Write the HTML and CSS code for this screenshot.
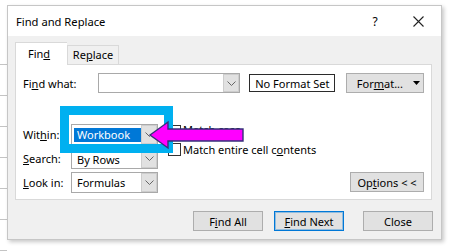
FILE: index.html
```html
<!DOCTYPE html>
<html>
<head>
<meta charset="utf-8">
<link rel="stylesheet" href="styles.css">
</head>
<body>
<div class="stage">
  <div class="dialog">
    <div class="titlebar">
      <span class="title">Find and Replace</span>
      <span class="help">?</span>
      <span class="close"><svg width="11" height="11" viewBox="0 0 11 11"><path d="M0.5 0.5L10.5 10.5M10.5 0.5L0.5 10.5" stroke="#222" stroke-width="1.1" fill="none"/></svg></span>
    </div>
    <div class="tabs">
      <div class="tab active">Fin<u>d</u></div>
      <div class="tab">Re<u>p</u>lace</div>
    </div>
    <div class="panel">
      <div class="row1">
        <span class="lbl lbl-find">Fi<u>n</u>d what:</span>
        <div class="combo wide"><span class="val"></span><span class="dd"><svg width="9" height="5" viewBox="0 0 9 5"><polyline points="0.5,0.5 4.5,4.5 8.5,0.5" fill="none" stroke="#666"/></svg></span></div>
        <div class="nofmt">No Format Set</div>
        <div class="btn format"><span>For<u>m</u>at...</span><svg width="7" height="4" viewBox="0 0 7 4"><polygon points="0,0 7,0 3.5,4" fill="#000"/></svg></div>
      </div>
      <div class="lower">
        <div class="fields">
          <div class="field"><span class="lbl lbl-s">Wit<u>h</u>in:</span><div class="combo"><span class="val"><span class="hl">Workbook</span></span><span class="dd"><svg width="9" height="5" viewBox="0 0 9 5"><polyline points="0.5,0.5 4.5,4.5 8.5,0.5" fill="none" stroke="#666"/></svg></span></div></div>
          <div class="field"><span class="lbl lbl-s"><u>S</u>earch:</span><div class="combo"><span class="val low">By Rows</span><span class="dd"><svg width="9" height="5" viewBox="0 0 9 5"><polyline points="0.5,0.5 4.5,4.5 8.5,0.5" fill="none" stroke="#666"/></svg></span></div></div>
          <div class="field"><span class="lbl lbl-s"><u>L</u>ook in:</span><div class="combo"><span class="val">Formulas</span><span class="dd"><svg width="9" height="5" viewBox="0 0 9 5"><polyline points="0.5,0.5 4.5,4.5 8.5,0.5" fill="none" stroke="#666"/></svg></span></div></div>
        </div>
        <div class="checks">
          <div class="check"><span class="box"></span><span>Match <u>c</u>ase</span></div>
          <div class="check"><span class="box"></span><span>Match entire cell c<u>o</u>ntents</span></div>
        </div>
        <div class="btn options">Op<u>t</u>ions &lt; &lt;</div>
      </div>
    </div>
    <div class="actions">
      <div class="btn act">F<u>i</u>nd All</div>
      <div class="btn act default"><u>F</u>ind Next</div>
      <div class="btn act close-btn">Close</div>
    </div>
  </div>
  <div class="callout"></div>
  <svg class="arrow" width="451" height="251" viewBox="0 0 451 251">
    <polygon points="150,135 168,122 168,129 243,129 243,141 168,141 168,148" fill="#ff00ff" stroke="#35307a" stroke-width="1.4" stroke-linejoin="miter"/>
  </svg>
</div>
</body>
</html>
```

FILE: styles.css
```css
* { box-sizing: border-box; }

body {
  margin: 0;
  font-family: "Noto Sans", "Open Sans", sans-serif;
  font-size: 11px;
  color: #000;
  background: #fff;
}

u { text-decoration: underline; text-underline-offset: 1px; }

.stage {
  position: relative;
  width: 451px;
  height: 251px;
  overflow: hidden;
  padding: 5px 0 0 7px;
  background-color: #fff;
  background-image: repeating-linear-gradient(180deg, #c4c4c4 0, #c4c4c4 1px, transparent 1px, transparent 31px);
  background-position: 0 64px;
  background-size: 7px 187px;
  background-repeat: no-repeat;
}

.dialog {
  width: 435px;
  height: 235px;
  border: 1px solid #c6c6c6;
  background: #f0f0f0;
  box-shadow: 2px 2px 4px rgba(0, 0, 0, 0.22);
  display: flex;
  flex-direction: column;
}

.titlebar {
  height: 30px;
  background: #fff;
  display: flex;
  align-items: center;
  padding-left: 8px;
  flex-shrink: 0;
}

.title { flex: 1; font-size: 11.2px; }

.help {
  width: 10px;
  text-align: center;
  font-size: 12px;
  margin-right: 33px;
}

.close {
  width: 11px;
  height: 11px;
  margin-right: 17px;
  display: flex;
}

.tabs {
  display: flex;
  align-items: flex-end;
  height: 28px;
  padding-left: 7px;
  flex-shrink: 0;
}

.tab {
  width: 52px;
  height: 19px;
  border: 1px solid #d9d9d9;
  border-bottom: none;
  background: #f0f0f0;
  text-align: center;
  line-height: 17px;
}

.tab.active {
  height: 23px;
  margin-bottom: -1px;
  background: #fff;
  position: relative;
  z-index: 1;
  text-align: left;
  padding-left: 12px;
  line-height: 21px;
  border-right: none;
}

.panel {
  margin: 0 9px 0 7px;
  height: 136px;
  border: 1px solid #d9d9d9;
  background: #fff;
  padding: 8px 7px 0 7px;
  flex-shrink: 0;
}

.row1 {
  display: flex;
  align-items: center;
  height: 20px;
}

.lbl { white-space: nowrap; }
.lbl-find { width: 75px; }
.lbl-s { width: 48px; }

.combo {
  width: 87px;
  height: 21px;
  border: 1px solid #a9a9a9;
  background: #fff;
  display: flex;
  align-items: stretch;
  padding: 1px;
}

.combo.wide { width: 143px; height: 20px; }

.combo .val {
  flex: 1;
  display: flex;
  align-items: center;
  padding-left: 4px;
  overflow: hidden;
  white-space: nowrap;
}

.combo .val.low { padding-top: 2px; }

.combo .hl {
  background: #0078d7;
  color: #fff;
  width: 67px;
  height: 14px;
  line-height: 14px;
  margin-left: -3px;
  padding-left: 3px;
}

.combo .dd {
  width: 16px;
  background: #e1e1e1;
  border: 1px solid #cdcdcd;
  display: flex;
  align-items: center;
  justify-content: center;
  margin: -1px -1px -1px 0;
}

.nofmt {
  margin-left: 9px;
  width: 86px;
  height: 18px;
  border: 1px solid #2b2b2b;
  display: flex;
  align-items: center;
  justify-content: center;
  white-space: nowrap;
}

.btn {
  background: #e1e1e1;
  border: 1px solid #adadad;
  display: flex;
  align-items: center;
  justify-content: center;
  white-space: nowrap;
}

.btn.format {
  margin-left: 11px;
  width: 78px;
  height: 20px;
  justify-content: flex-end;
  padding-right: 3px;
}

.btn.format svg { margin-left: 10px; }

.lower {
  display: flex;
  margin-top: 31px;
}

.fields {
  display: flex;
  flex-direction: column;
  gap: 3px;
}

.field {
  display: flex;
  align-items: center;
  height: 21px;
}

.checks {
  margin-left: 10px;
  padding-top: 1px;
  display: flex;
  flex-direction: column;
  gap: 5px;
}

.check {
  display: flex;
  align-items: center;
  height: 13px;
  white-space: nowrap;
}

.check .box {
  width: 13px;
  height: 13px;
  border: 1px solid #333;
  background: #fff;
  margin-right: 2px;
  flex-shrink: 0;
}

.check:first-child span:last-child { position: relative; top: -2px; }

.btn.options {
  margin-left: auto;
  align-self: flex-end;
  width: 74px;
  height: 20px;
  margin-bottom: 1px;
}

.actions {
  display: flex;
  justify-content: flex-end;
  padding-right: 8px;
  margin-top: 11px;
}

.btn.act {
  width: 70px;
  height: 20px;
  margin-left: 11px;
}

.btn.default {
  border: 1px solid #0078d7;
  box-shadow: inset 0 0 0 1px rgba(0, 120, 215, 0.35);
}

.btn.close-btn { margin-left: 19px; }

.callout {
  position: absolute;
  left: 60px;
  top: 106px;
  width: 113px;
  height: 47px;
  border: 9px solid #00b0f0;
}

.arrow {
  position: absolute;
  left: 0;
  top: 0;
  pointer-events: none;
}
```
